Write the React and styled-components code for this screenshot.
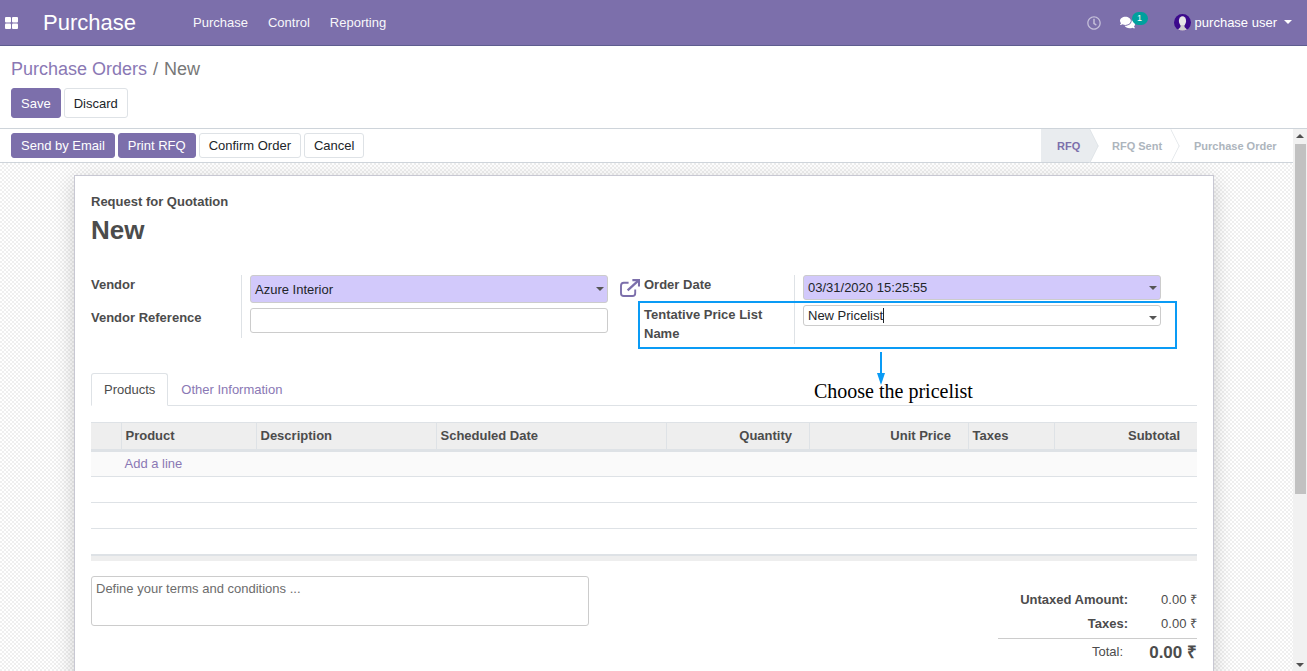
import React from "react";
import styled, { createGlobalStyle } from "styled-components";
import { FaComments, FaRegClock } from "react-icons/fa";

const GlobalStyle = createGlobalStyle`
  html, body {
    margin: 0;
    height: 100%;
    overflow: hidden;
  }
  body {
    font-family: "Liberation Sans", Arial, sans-serif;
    font-size: 13px;
    color: #4c4c4c;
    background: #fff;
  }
  * {
    box-sizing: border-box;
  }
`;

const Page = styled.div`
  height: 671px;
  display: flex;
  flex-direction: column;
  overflow: hidden;
`;

const Navbar = styled.header`
  flex: none;
  height: 46px;
  display: flex;
  align-items: center;
  background: #7c6fab;
  border-bottom: 1px solid #5e5d8f;
  color: #fff;
  padding: 0 15px 0 5px;
`;

const AppsIcon = styled.svg`
  width: 13px;
  height: 12px;
  fill: #fff;
`;

const BrandTitle = styled.div`
  font-size: 22px;
  margin-left: 25px;
  width: 150px;
`;

const Menu = styled.nav`
  display: flex;
  gap: 20px;
  flex: 1;
`;

const MenuItem = styled.span`
  color: #fff;
  opacity: 0.95;
`;

const Systray = styled.div`
  display: flex;
  align-items: center;
`;

const ClockIcon = styled(FaRegClock)`
  width: 14px;
  height: 14px;
  color: rgba(255, 255, 255, 0.55);
`;

const Messages = styled.div`
  position: relative;
  margin-left: 19px;
  width: 54px;
  height: 16px;
  display: flex;
  align-items: center;
`;

const Badge = styled.span`
  position: absolute;
  left: 12px;
  top: -3px;
  width: 16px;
  height: 13px;
  border-radius: 7px;
  background: #00a09d;
  color: #fff;
  font-size: 9px;
  line-height: 13px;
  text-align: center;
`;

const Avatar = styled.svg`
  width: 17px;
  height: 17px;
  margin-right: 4px;
`;

const Caret = styled.span`
  display: inline-block;
  margin-left: 7px;
  margin-bottom: 2px;
  border-top: 4px solid ${(p) => p.$color || "#fff"};
  border-left: 4px solid transparent;
  border-right: 4px solid transparent;
`;

const ControlPanel = styled.div`
  flex: none;
  height: 83px;
  padding: 12px 11px 0;
  border-bottom: 1px solid #ced4da;
`;

const Breadcrumb = styled.div`
  font-size: 18px;
  line-height: 22px;
  color: #777;
`;

const CrumbLink = styled.span`
  color: #8a78b4;
`;

const CrumbSep = styled.span`
  margin: 0 6px;
`;

const ButtonRow = styled.div`
  display: flex;
  gap: 3px;
  margin-top: 8px;
`;

const Button = styled.button`
  height: ${(p) => p.$height || 30}px;
  padding: 0 9px;
  font: inherit;
  border-radius: 3px;
  border: 1px solid ${(p) => (p.$primary ? "#7c6fab" : "#dee2e6")};
  background: ${(p) => (p.$primary ? "#7c6fab" : "#fff")};
  color: ${(p) => (p.$primary ? "#fff" : "#212529")};
`;

const Body = styled.div`
  flex: 1;
  min-height: 0;
  display: flex;
`;

const Main = styled.div`
  flex: 1;
  min-width: 0;
  display: flex;
  flex-direction: column;
`;

const StatusBar = styled.div`
  flex: none;
  height: 34px;
  display: flex;
  justify-content: space-between;
  align-items: stretch;
  padding-left: 11px;
  border-bottom: 1px solid #ced4da;
`;

const ActionButtons = styled.div`
  display: flex;
  align-items: center;
  gap: 3px;
  height: 33px;
`;

const Steps = styled.div`
  display: flex;
`;

const Step = styled.div`
  position: relative;
  display: flex;
  align-items: center;
  font-size: 11px;
  font-weight: bold;
  width: ${(p) => p.$width}px;
  padding-left: ${(p) => p.$pad}px;
  color: ${(p) => (p.$active ? "#7c6fab" : "#adb5bd")};
  background: ${(p) => (p.$active ? "#e9ecef" : "#fff")};

  &::after {
    content: "";
    display: ${(p) => (p.$last ? "none" : "block")};
    position: absolute;
    z-index: 1;
    top: 5px;
    right: -12px;
    width: 23px;
    height: 23px;
    background: ${(p) => (p.$active ? "#e9ecef" : "#fff")};
    border-top: 1px solid #dee2e6;
    border-right: 1px solid #dee2e6;
    transform: scaleX(0.5) rotate(45deg);
  }
`;

const Canvas = styled.div`
  flex: 1;
  min-height: 0;
  overflow: hidden;
  padding: 12px 0 0 74px;
  background-color: #fff;
  background-image: conic-gradient(#efefef 25%, #fff 0 50%, #efefef 0 75%, #fff 0);
  background-size: 4px 4px;
`;

const Sheet = styled.div`
  position: relative;
  width: 1140px;
  height: 600px;
  padding: 17px 16px 0;
  background: #fff;
  border: 1px solid #c8c8d3;
  box-shadow: 0 5px 20px -1px rgba(0, 0, 0, 0.2);
`;

const SubTitle = styled.div`
  font-weight: bold;
  line-height: 18px;
`;

const RecordName = styled.h1`
  margin: 3px 0 0;
  font-size: 26px;
  line-height: 32px;
  font-weight: bold;
`;

const Groups = styled.div`
  display: flex;
  margin-top: 29px;
`;

const Group = styled.div`
  width: ${(p) => p.$width}px;
`;

const FieldRow = styled.div`
  display: grid;
  grid-template-columns: 150px 1fr;
  min-height: ${(p) => p.$height}px;
`;

const FieldLabel = styled.label`
  font-weight: bold;
  line-height: 19px;
  padding-top: ${(p) => p.$top ?? 0}px;
`;

const FieldValue = styled.div`
  border-left: 1px solid #dee2e6;
  padding-left: 8px;
`;

const Input = styled.div`
  position: relative;
  display: flex;
  align-items: center;
  height: ${(p) => p.$height}px;
  padding: 0 4px;
  margin-top: ${(p) => p.$top || 0}px;
  border-radius: 3px;
  border: 1px solid #ccc;
  background: ${(p) => (p.$required ? "#d2c9fb" : "#fff")};
  color: #212529;
`;

const SelectCaret = styled(Caret)`
  position: absolute;
  right: 3px;
  top: ${(p) => p.$top}px;
  margin: 0;
`;

const TextCursor = styled.span`
  width: 1px;
  height: 15px;
  background: #212529;
`;

const OpenIcon = styled.svg`
  width: 20px;
  height: 18px;
  margin: 4px 4px 0 12px;
  flex: none;
  fill: none;
  stroke: #7c6fab;
`;

const HighlightBox = styled.div`
  position: absolute;
  left: 563px;
  top: 125px;
  width: 539px;
  height: 48px;
  border: 2px solid #0a9bf5;
`;

const ArrowShaft = styled.div`
  position: absolute;
  left: 805px;
  top: 176px;
  width: 2px;
  height: 24px;
  background: #0a9bf5;
`;

const ArrowHead = styled.div`
  position: absolute;
  left: 802px;
  top: 197px;
  border-top: 12px solid #0a9bf5;
  border-left: 4px solid transparent;
  border-right: 4px solid transparent;
`;

const Callout = styled.div`
  position: absolute;
  left: 739px;
  top: 203px;
  font-family: "Liberation Serif", "Times New Roman", serif;
  font-size: 20px;
  line-height: 24px;
  color: #000;
  white-space: nowrap;
`;

const Tabs = styled.div`
  display: flex;
  height: 33px;
  margin-top: 29px;
  border-bottom: 1px solid #dee2e6;
`;

const Tab = styled.div`
  height: 33px;
  padding: 0 12px;
  line-height: 32px;
  border-radius: 3px 3px 0 0;
  color: ${(p) => (p.$active ? "#4c4c4c" : "#8a78b4")};
  background: ${(p) => (p.$active ? "#fff" : "transparent")};
  border: 1px solid ${(p) => (p.$active ? "#dee2e6" : "transparent")};
  border-bottom-color: ${(p) => (p.$active ? "#fff" : "transparent")};
`;

const Table = styled.table`
  width: 1106px;
  margin-top: 16px;
  border-collapse: collapse;
  table-layout: fixed;
`;

const HeadCell = styled.th`
  height: 28px;
  padding: 0 ${(p) => p.$right || 4}px 2px 4px;
  text-align: ${(p) => (p.$right ? "right" : "left")};
  font-weight: bold;
  background: #eeeeee;
  border-top: 1px solid #dee2e6;
  border-bottom: 3px solid #dee2e6;
  border-left: 1px solid #dee2e6;

  &:first-child {
    border-left: 0;
  }
`;

const BodyRow = styled.tr`
  height: 26px;
  background: ${(p) => (p.$odd ? "#fafafa" : "#fff")};
  border-bottom: 1px solid #dee2e6;
`;

const AddLine = styled.td`
  padding: 0 0 2px 3.5px;
  color: #8a78b4;
`;

const TableFoot = styled.div`
  width: 1106px;
  height: 6px;
  background: #eeeeee;
  border-top: 1px solid #dee2e6;
`;

const BottomRow = styled.div`
  display: flex;
  justify-content: space-between;
  align-items: flex-start;
  margin-top: 15px;
`;

const Terms = styled.div`
  width: 498px;
  height: 50px;
  padding: 4px;
  border-radius: 3px;
  border: 1px solid #ccc;
  color: #6c6c6c;
`;

const Totals = styled.div`
  width: 199px;
  padding-top: 11px;
`;

const TotalRow = styled.div`
  display: flex;
  justify-content: flex-end;
  align-items: center;
  height: 24px;
`;

const TotalLabel = styled.span`
  font-weight: bold;
`;

const TotalValue = styled.span`
  width: 69px;
  text-align: right;
`;

const GrandRow = styled.div`
  display: flex;
  justify-content: flex-end;
  align-items: center;
  height: 25px;
  margin-top: 3px;
  border-top: 1px solid #ccc;
`;

const GrandValue = styled.span`
  width: 74px;
  text-align: right;
  font-size: 17px;
  font-weight: bold;
`;

const Scrollbar = styled.div`
  position: relative;
  flex: none;
  width: 14px;
  background: #f1f1f1;
`;

const ScrollThumb = styled.div`
  position: absolute;
  left: 2px;
  right: 1px;
  top: 15px;
  height: 350px;
  background: #c1c1c1;
`;

const ScrollArrow = styled.div`
  position: absolute;
  left: 3px;
  ${(p) => (p.$up ? "top: 5px;" : "bottom: 4px;")}
  border-left: 4px solid transparent;
  border-right: 4px solid transparent;
  ${(p) => (p.$up ? "border-bottom" : "border-top")}: 4px solid #505050;
`;

const columns = [30, 135, 180, 230, 143, 159, 86, 143];

const App = () => {
  return (
    <Page>
      <GlobalStyle />
      <Navbar>
        <AppsIcon viewBox="0 0 13 12">
          <rect x="0" y="0" width="6" height="5.4" rx="1" />
          <rect x="7" y="0" width="6" height="5.4" rx="1" />
          <rect x="0" y="6.6" width="6" height="5.4" rx="1" />
          <rect x="7" y="6.6" width="6" height="5.4" rx="1" />
        </AppsIcon>
        <BrandTitle>Purchase</BrandTitle>
        <Menu>
          <MenuItem>Purchase</MenuItem>
          <MenuItem>Control</MenuItem>
          <MenuItem>Reporting</MenuItem>
        </Menu>
        <Systray>
          <ClockIcon />
          <Messages>
            <FaComments size={15} color="#fff" />
            <Badge>1</Badge>
          </Messages>
          <Avatar viewBox="0 0 17 17">
            <circle cx="8.5" cy="8.5" r="8.5" fill="#3c0a8c" />
            <ellipse cx="8.5" cy="7" rx="3.6" ry="4.8" fill="#e6e6e6" />
            <path d="M6.5 11h4v2l2.5 2.4a8.5 8.5 0 0 1-9 0L6.5 13z" fill="#cfcfcf" />
          </Avatar>
          <span>purchase user</span>
          <Caret />
        </Systray>
      </Navbar>

      <ControlPanel>
        <Breadcrumb>
          <CrumbLink>Purchase Orders</CrumbLink>
          <CrumbSep>/</CrumbSep>
          New
        </Breadcrumb>
        <ButtonRow>
          <Button $primary>Save</Button>
          <Button>Discard</Button>
        </ButtonRow>
      </ControlPanel>

      <Body>
        <Main>
          <StatusBar>
            <ActionButtons>
              <Button $primary $height={25}>Send by Email</Button>
              <Button $primary $height={25}>Print RFQ</Button>
              <Button $height={25}>Confirm Order</Button>
              <Button $height={25}>Cancel</Button>
            </ActionButtons>
            <Steps>
              <Step $active $width={49} $pad={16}>RFQ</Step>
              <Step $width={81} $pad={22}>RFQ Sent</Step>
              <Step $width={122} $pad={23} $last>Purchase Order</Step>
            </Steps>
          </StatusBar>

          <Canvas>
            <Sheet>
              <SubTitle>Request for Quotation</SubTitle>
              <RecordName>New</RecordName>

              <Groups>
                <Group $width={517}>
                  <FieldRow $height={33}>
                    <FieldLabel>Vendor</FieldLabel>
                    <FieldValue>
                      <Input $required $height={28}>
                        Azure Interior
                        <SelectCaret $color="#555" $top={11} />
                      </Input>
                    </FieldValue>
                  </FieldRow>
                  <FieldRow $height={30}>
                    <FieldLabel>Vendor Reference</FieldLabel>
                    <FieldValue>
                      <Input $height={25} />
                    </FieldValue>
                  </FieldRow>
                </Group>
                <OpenIcon viewBox="0 0 21 19">
                  <path
                    d="M9 4H4A3 3 0 0 0 1 7v8a3 3 0 0 0 3 3h9a3 3 0 0 0 3-3v-4"
                    strokeWidth="2"
                  />
                  <path d="M8 12 19 2" strokeWidth="2.4" />
                  <path d="M13 1.2h7v6.6" strokeWidth="2.2" />
                </OpenIcon>
                <Group $width={517}>
                  <FieldRow $height={27}>
                    <FieldLabel>Order Date</FieldLabel>
                    <FieldValue>
                      <Input $required $height={25}>
                        03/31/2020 15:25:55
                        <SelectCaret $color="#555" $top={10} />
                      </Input>
                    </FieldValue>
                  </FieldRow>
                  <FieldRow $height={42}>
                    <FieldLabel $top={3}>Tentative Price List Name</FieldLabel>
                    <FieldValue>
                      <Input $height={21} $top={3}>
                        New Pricelist
                        <TextCursor />
                        <SelectCaret $color="#555" $top={10} />
                      </Input>
                    </FieldValue>
                  </FieldRow>
                </Group>
              </Groups>

              <HighlightBox />
              <ArrowShaft />
              <ArrowHead />
              <Callout>Choose the pricelist</Callout>

              <Tabs>
                <Tab $active>Products</Tab>
                <Tab>Other Information</Tab>
              </Tabs>

              <Table>
                <colgroup>
                  {columns.map((width, index) => (
                    <col key={index} width={width} />
                  ))}
                </colgroup>
                <thead>
                  <tr>
                    <HeadCell />
                    <HeadCell>Product</HeadCell>
                    <HeadCell>Description</HeadCell>
                    <HeadCell>Scheduled Date</HeadCell>
                    <HeadCell $right={16.5}>Quantity</HeadCell>
                    <HeadCell $right={16.5}>Unit Price</HeadCell>
                    <HeadCell>Taxes</HeadCell>
                    <HeadCell $right={17}>Subtotal</HeadCell>
                  </tr>
                </thead>
                <tbody>
                  <BodyRow $odd>
                    <td />
                    <AddLine colSpan={7}>Add a line</AddLine>
                  </BodyRow>
                  <BodyRow />
                  <BodyRow $odd />
                  <BodyRow />
                </tbody>
              </Table>
              <TableFoot />

              <BottomRow>
                <Terms>Define your terms and conditions ...</Terms>
                <Totals>
                  <TotalRow>
                    <TotalLabel>Untaxed Amount:</TotalLabel>
                    <TotalValue>0.00 ₹</TotalValue>
                  </TotalRow>
                  <TotalRow>
                    <TotalLabel>Taxes:</TotalLabel>
                    <TotalValue>0.00 ₹</TotalValue>
                  </TotalRow>
                  <GrandRow>
                    <span>Total:</span>
                    <GrandValue>0.00 ₹</GrandValue>
                  </GrandRow>
                </Totals>
              </BottomRow>
            </Sheet>
          </Canvas>
        </Main>
        <Scrollbar>
          <ScrollArrow $up />
          <ScrollThumb />
          <ScrollArrow />
        </Scrollbar>
      </Body>
    </Page>
  );
};

export default App;
